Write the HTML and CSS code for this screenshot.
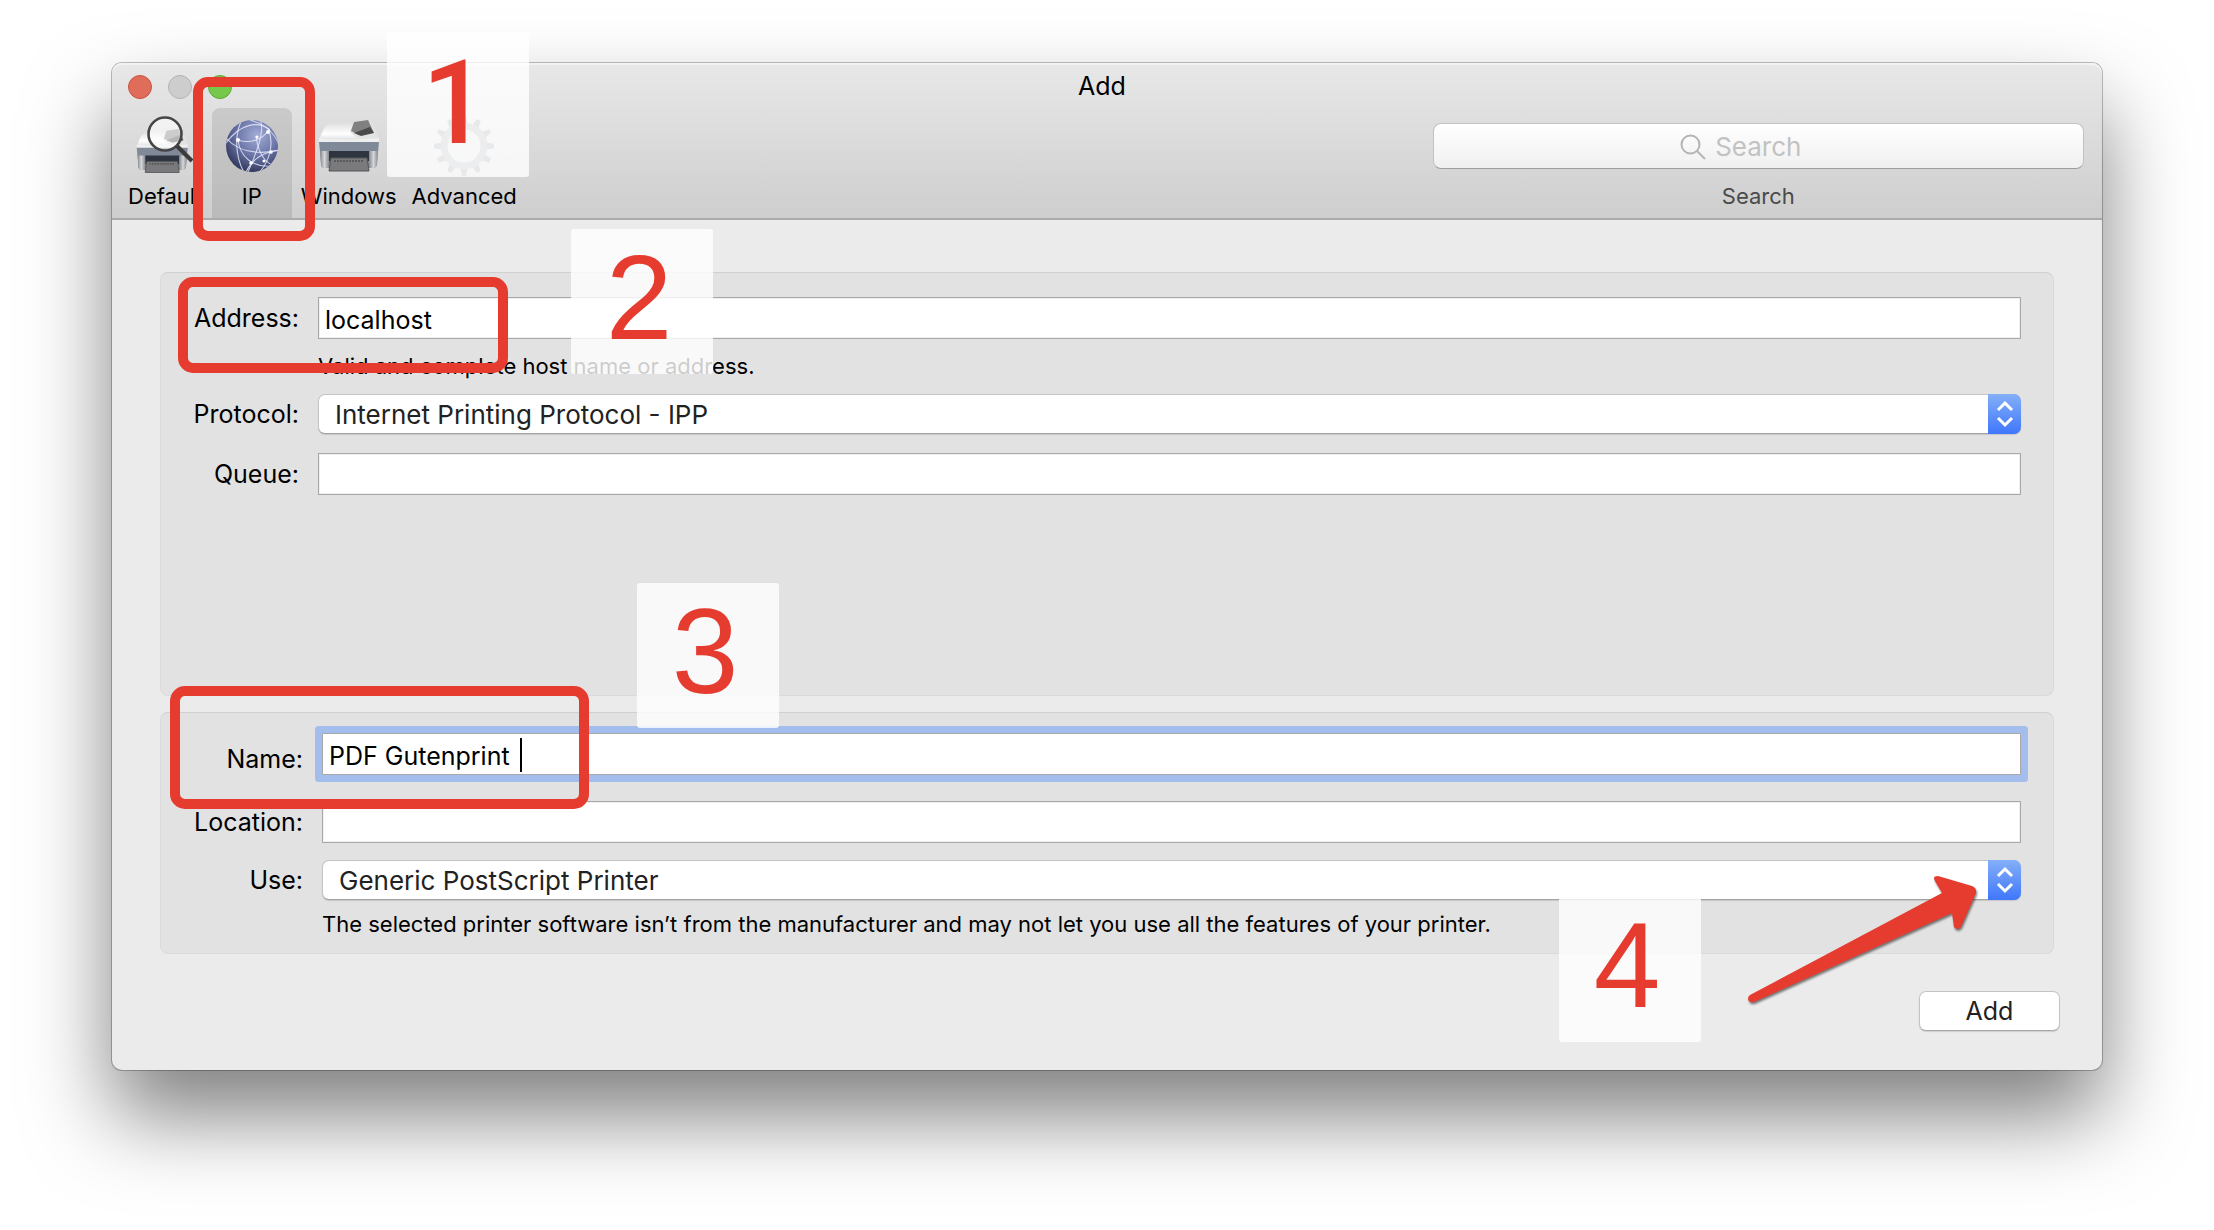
FILE: index.html
```html
<!DOCTYPE html>
<html lang="en">
<head>
  <meta charset="UTF-8">
  <meta name="viewport" content="width=device-width, initial-scale=1.0">
  <title>Add</title>
  <link rel="stylesheet" href="styles.css">
</head>
<body>
  <main class="window">
    <header class="window-header">
      <div class="title-bar">
        <div class="traffic">
          <button class="traffic-btn traffic-close" aria-label="Close"></button>
          <button class="traffic-btn traffic-min" aria-label="Minimize"></button>
          <button class="traffic-btn traffic-zoom" aria-label="Zoom"></button>
        </div>
        <h1 class="title">Add</h1>
      </div>

      <div class="toolbar">
        <nav class="tabs">
          <button class="tab">
            <svg class="tab-icon" viewBox="0 0 64 64" aria-hidden="true">
              <use href="#printer" transform="translate(2 10) scale(.85)"></use>
              <circle cx="32" cy="20" r="16.5" fill="#fff" fill-opacity=".6" stroke="#454545" stroke-width="2.6"></circle>
              <path d="M44 32l15 15" stroke="#3c3c3c" stroke-width="4"></path>
            </svg>
            <span>Default</span>
          </button>
          <button class="tab tab-active">
            <svg class="tab-icon" viewBox="0 0 64 64" aria-hidden="true">
              <defs>
                <radialGradient id="globe" cx=".6" cy=".3" r=".75">
                  <stop offset="0" stop-color="#a4add6"></stop>
                  <stop offset=".5" stop-color="#6d78aa"></stop>
                  <stop offset="1" stop-color="#2d3356"></stop>
                </radialGradient>
                <clipPath id="globe-clip"><circle cx="32" cy="32" r="26"></circle></clipPath>
              </defs>
              <circle cx="32" cy="32" r="26" fill="url(#globe)"></circle>
              <g clip-path="url(#globe-clip)" fill="none" stroke="#e8ecff" stroke-width="1.1" stroke-opacity=".8">
                <path d="M22 6C15 18 14 42 25 60"></path>
                <path d="M40 6C46 16 35 42 28 58"></path>
                <path d="M48 14C54 28 51 46 38 60"></path>
                <path d="M30 6C45 10 56 20 60 34"></path>
                <path d="M18 26C30 30 42 26 49 16"></path>
                <path d="M6 29C20 10 38 6 50 16"></path>
                <path d="M6 24C20 40 42 40 60 36"></path>
                <path d="M18 26C20 42 32 54 52 52"></path>
                <path d="M36 22C38 38 44 48 54 52"></path>
                <path d="M26 58C34 42 46 38 60 36"></path>
              </g>
              <g fill="#fff">
                <circle cx="18" cy="26" r="2"></circle>
                <circle cx="48" cy="18" r="2"></circle>
                <circle cx="37" cy="23" r="1.5"></circle>
                <circle cx="31" cy="49" r="1.8"></circle>
                <circle cx="51" cy="38" r="1.8"></circle>
                <circle cx="44" cy="47" r="1.5"></circle>
              </g>
            </svg>
            <span>IP</span>
          </button>
          <button class="tab">
            <svg class="tab-icon" viewBox="0 0 64 64" aria-hidden="true">
              <defs>
                <linearGradient id="lid" x1="0" y1="0" x2="0" y2="1">
                  <stop offset="0" stop-color="#dcdcdc"></stop>
                  <stop offset=".6" stop-color="#fff"></stop>
                  <stop offset="1" stop-color="#d2d5d8"></stop>
                </linearGradient>
                <linearGradient id="side" x1="0" y1="0" x2="1" y2="0">
                  <stop offset="0" stop-color="#84878c"></stop>
                  <stop offset=".5" stop-color="#d6d7d9"></stop>
                  <stop offset="1" stop-color="#85888d"></stop>
                </linearGradient>
                <g id="printer">
                  <path d="M3 36h58l-1 14q-1 4-4 4H8q-4 0-4-4z" fill="#7b8591"></path>
                  <path d="M2 28C4 19 8 11 13 9q9-2 18-1 3 0 4 3l26 11 1 6z" fill="url(#lid)"></path>
                  <path d="M33 18L36 8l16-1q3 0 4 3l6 15-22-1z" fill="#e2e2e2"></path>
                  <path d="M34 17l3-9 14-2 6 13-8-2-7 4z" fill="#808080"></path>
                  <path d="M37 19l16-6 4 6-13 3z" fill="#4a4a4a"></path>
                  <path d="M2 24q30 3 60 0v5H2z" fill="#efefef"></path>
                  <path d="M2 28h60l-1 10H3z" fill="#7f8998"></path>
                  <path d="M12 37h40v10H12z" fill="#2e3540"></path>
                  <path d="M3 37h9v17H8q-4 0-4-4z" fill="url(#side)"></path>
                  <path d="M52 37h9l-1 13q0 4-4 4h-4z" fill="url(#side)"></path>
                  <path d="M14 44h36l2 13H12z" fill="#7a7a7d" stroke="#555558"></path>
                  <path d="M17 47h30" stroke="#59595c" stroke-width="2" stroke-dasharray="2 1"></path>
                </g>
              </defs>
              <use href="#printer"></use>
            </svg>
            <span>Windows</span>
          </button>
          <button class="tab">
            <svg class="tab-icon" viewBox="0 0 64 64" aria-hidden="true">
              <g fill="#8b9096">
                <g id="teeth">
                  <path id="tooth" d="M28 12l2-10h4l2 10zM28 52l2 10h4l2-10z"></path>
                  <use href="#tooth" transform="rotate(30 32 32)"></use>
                  <use href="#tooth" transform="rotate(60 32 32)"></use>
                </g>
                <use href="#teeth" transform="rotate(90 32 32)"></use>
              </g>
              <circle cx="32" cy="32" r="19" fill="none" stroke="#a2a7ac" stroke-width="9"></circle>
              <circle cx="32" cy="32" r="15" fill="none" stroke="#d8dadd" stroke-width="3"></circle>
            </svg>
            <span>Advanced</span>
          </button>
        </nav>

        <div class="search">
          <div class="search-box">
            <input type="search" id="search" class="search-input" placeholder="Search">
            <svg class="search-icon" viewBox="0 0 26 26" aria-hidden="true">
              <circle cx="10.5" cy="10.5" r="9" fill="none" stroke="#b4b4b4" stroke-width="2"></circle>
              <path d="M17 17l8 8" stroke="#b4b4b4" stroke-width="2"></path>
            </svg>
          </div>
          <label for="search" class="search-label">Search</label>
        </div>
      </div>
    </header>

    <form class="content">
      <section class="panel panel-connection">
        <div class="row">
          <label for="address" class="label">Address:</label>
          <input type="text" id="address" class="input" value="localhost">
        </div>
        <p class="hint">Valid and complete host name or address.</p>
        <div class="row">
          <label for="protocol" class="label">Protocol:</label>
          <div class="select-box">
            <select id="protocol" class="select">
              <option>Internet Printing Protocol - IPP</option>
            </select>
            <svg class="stepper" viewBox="0 0 33 40" aria-hidden="true">
              <path d="M10 16l7-7 7 7M10 24l7 7 7-7"></path>
            </svg>
          </div>
        </div>
        <div class="row row-queue">
          <label for="queue" class="label">Queue:</label>
          <input type="text" id="queue" class="input">
        </div>
      </section>

      <section class="panel panel-details">
        <div class="row row-name">
          <label for="name" class="label">Name:</label>
          <div class="name-box">
            <input type="text" id="name" class="input input-focus" value="PDF Gutenprint ">
            <span class="caret"></span>
          </div>
        </div>
        <div class="row row-location">
          <label for="location" class="label">Location:</label>
          <input type="text" id="location" class="input">
        </div>
        <div class="row row-use">
          <label for="use" class="label">Use:</label>
          <div class="select-box">
            <select id="use" class="select">
              <option>Generic PostScript Printer</option>
            </select>
            <svg class="stepper" viewBox="0 0 33 40" aria-hidden="true">
              <path d="M10 16l7-7 7 7M10 24l7 7 7-7"></path>
            </svg>
          </div>
        </div>
        <p class="hint">The selected printer software isn’t from the manufacturer and may not let you use all the features of your printer.</p>
      </section>

      <div class="actions">
        <button type="button" class="btn">Add</button>
      </div>
    </form>

    <!-- numbered steps drawn over the dialog -->
    <div class="frame frame-1"></div>
    <div class="frame frame-2"></div>
    <div class="frame frame-3"></div>
    <div class="step step-1">1</div>
    <div class="step step-2">2</div>
    <div class="step step-3">3</div>
    <div class="step step-4">4</div>
    <svg class="arrow" viewBox="0 0 250 140" aria-hidden="true">
      <path d="M10 125L202 23L195 11Q192 6 198 6L232 16Q237 18 236 23L221 57Q217 61 214 57L212 43L14 132Q9 133 8 129Q8 126 10 125z"></path>
    </svg>
  </main>
</body>
</html>
```
FILE: styles.css
```css
:root {
  --window: #ebebeb;
  --panel: #e2e2e2;
  --border: #a8a8a8;
  --mark: #e63c30;
  --text: 25px;
  --text-control: 26px;
  --text-small: 22px;
}

* {
  margin: 0;
  padding: 0;
  box-sizing: border-box;
}

body {
  font-family: Inter, "Liberation Sans", sans-serif;
  font-size: var(--text);
  color: #000;
  background-color: #fff;
  min-height: 100vh;
  padding: 63px 112px 160px;
}

button,
input,
select {
  font: inherit;
  color: inherit;
}

.window {
  position: relative;
  background-color: var(--window);
  border-radius: 10px;
  box-shadow: 0 0 0 1px rgba(0, 0, 0, 0.25), 0 46px 84px rgba(0, 0, 0, 0.5);
}

.window-header {
  border-radius: 10px 10px 0 0;
  border-bottom: 2px solid #ababab;
  background: linear-gradient(#e8e8e8, #cecece);
  box-shadow: inset 0 2px 0 #f3f3f3;
}

.title-bar {
  display: grid;
  grid-template-columns: 1fr auto 1fr;
  align-items: center;
  height: 45px;
  padding: 0 26px 0 16px;
}

.traffic {
  display: flex;
  gap: 16px;
}

.traffic-btn {
  width: 24px;
  height: 24px;
  border-radius: 50%;
  border: 1px solid #b3b3b3;
  background-color: #cdcdcd;
}

.traffic-close {
  background-color: #e06c5a;
  border-color: #c9543f;
}

.traffic-zoom {
  background-color: #76c84a;
  border-color: #5fa93a;
}

.title {
  font-size: var(--text);
  font-weight: 400;
  line-height: 47px;
}

.toolbar {
  display: flex;
  justify-content: space-between;
  height: 110px;
  padding: 0 18px 0 10px;
}

.tabs {
  display: flex;
  gap: 3px;
}

.tab {
  display: flex;
  flex-direction: column;
  align-items: center;
  min-width: 80px;
  padding: 6px 6px 0;
  border: none;
  background: transparent;
  font-size: var(--text-small);
  line-height: 36px;
}

.tab-active {
  border-radius: 8px 8px 0 0;
  background: linear-gradient(#cacaca, #bababa);
}

.tab-icon {
  width: 64px;
  height: 64px;
}

.search {
  width: 33.2%;
  padding-top: 15px;
  text-align: center;
}

.search-box {
  position: relative;
}

.search-input {
  display: block;
  width: 100%;
  height: 46px;
  border: 1px solid #c2c2c2;
  border-bottom-color: #9e9e9e;
  border-radius: 8px;
  background: linear-gradient(#fff, #f0f0f0);
  font-size: var(--text-control);
  text-align: center;
  appearance: none;
}

.search-input::placeholder {
  color: #c2c2c2;
}

.search-input::-webkit-search-cancel-button {
  display: none;
}

.search-icon {
  position: absolute;
  left: calc(50% - 78px);
  top: 11px;
  width: 26px;
  height: 26px;
}

.search-label {
  display: block;
  color: #4a4a4a;
  font-size: var(--text-small);
  line-height: 54px;
}

.content {
  padding: 52px 48px 39px;
}

.panel {
  padding-right: 32px;
  border: 1px solid #dadada;
  border-top-color: #d0d0d0;
  border-radius: 8px;
  background-color: var(--panel);
}

.panel-connection {
  --label-width: 138px;
  min-height: 424px;
  padding-top: 24px;
}

.panel-details {
  --label-width: 142px;
  min-height: 242px;
  margin-top: 16px;
  padding-top: 20px;
}

.row {
  display: grid;
  grid-template-columns: var(--label-width) 1fr;
  column-gap: 19px;
  align-items: center;
}

.row-queue {
  margin-top: 19px;
}

.row-name {
  align-items: end;
}

.row-location {
  margin-top: 26px;
}

.row-use {
  margin-top: 17px;
}

.label {
  text-align: right;
  line-height: 32px;
}

.input {
  display: block;
  width: 100%;
  height: 42px;
  padding: 3px 6px 0;
  border: 1px solid var(--border);
  border-radius: 0;
  background-color: #fff;
  box-shadow: inset 0 0 0 1px #f0f0f0;
  font-size: var(--text);
  outline: none;
}

.name-box,
.select-box {
  position: relative;
}

.input-focus {
  box-shadow: 0 0 0 7px #a3bdec;
  border-radius: 1px;
}

.caret {
  position: absolute;
  left: 198px;
  top: 5px;
  width: 2px;
  height: 34px;
  background-color: #000;
}

.select {
  display: block;
  width: 100%;
  height: 40px;
  padding: 0 50px 0 16px;
  border: 1px solid #c4c4c4;
  border-bottom-color: #a2a2a2;
  border-radius: 7px;
  background-color: #fff;
  color: #222;
  font-size: var(--text-control);
  appearance: none;
  box-shadow: 0 1px 1px rgba(0, 0, 0, 0.12);
}

.stepper {
  position: absolute;
  right: 0;
  top: 0;
  width: 33px;
  height: 40px;
  border-radius: 0 7px 7px 0;
  background: linear-gradient(#84aff8, #3f77fb);
  fill: none;
  stroke: #fff;
  stroke-width: 3;
  pointer-events: none;
}

.hint {
  padding-left: calc(var(--label-width) + 19px);
  font-size: var(--text-small);
  line-height: 55px;
}

.panel-details .hint {
  line-height: 48px;
}

.actions {
  display: flex;
  justify-content: flex-end;
  margin-top: 37px;
  margin-right: -6px;
}

.btn {
  width: 141px;
  height: 40px;
  border: 1px solid #c4c4c4;
  border-bottom-color: #a8a8a8;
  border-radius: 7px;
  background-color: #fff;
  color: #222;
  box-shadow: 0 1px 1px rgba(0, 0, 0, 0.12);
}

.frame {
  position: absolute;
  border: 10px solid var(--mark);
  border-radius: 15px;
}

.frame-1 {
  left: 81px;
  top: 14px;
  width: 122px;
  height: 164px;
}

.frame-2 {
  left: 66px;
  top: 214px;
  width: 330px;
  height: 96px;
}

.frame-3 {
  left: 58px;
  top: 623px;
  width: 419px;
  height: 123px;
}

.step {
  position: absolute;
  width: 142px;
  height: 145px;
  padding-right: 6px;
  border-radius: 3px;
  background-color: rgba(255, 255, 255, 0.8);
  color: var(--mark);
  font-family: "Liberation Sans", Arial, sans-serif;
  font-size: 120px;
  line-height: 137px;
  text-align: center;
}

/* a plain 1 without the foot */
.step-1 {
  left: 275px;
  top: -31px;
  font-family: Roboto, sans-serif;
  font-size: 116px;
  font-weight: 500;
  line-height: 142px;
}

.step-2 {
  left: 459px;
  top: 166px;
}

.step-3 {
  left: 525px;
  top: 520px;
}

.step-4 {
  right: 401px;
  top: 834px;
}

.arrow {
  position: absolute;
  right: 112px;
  top: 807px;
  width: 250px;
  height: 140px;
  fill: var(--mark);
  filter: drop-shadow(1px 2px 1px rgba(0, 0, 0, 0.5));
}
```
